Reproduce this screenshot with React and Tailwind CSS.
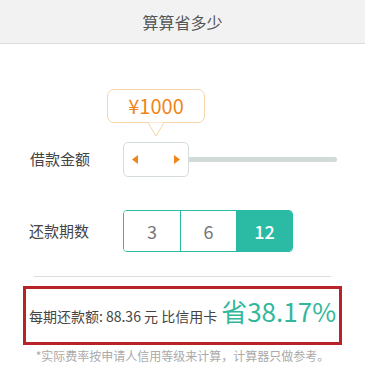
import React, { useState } from 'react';

const FONT = "font-['Noto_Sans_CJK_SC','Noto_Sans',sans-serif]";

const Tooltip = ({ value }) => (
  <div className="relative ml-[107px] w-[98px]">
    <div className="h-[34px] border border-[#f6d5aa] rounded-[7px] bg-white flex items-center justify-center text-[20px] leading-none text-[#f08519]">
      ¥{value}
    </div>
    {/* arrow */}
    <svg
      className="absolute left-[41px] top-[33px]"
      width="16"
      height="15"
      viewBox="0 0 16 15"
    >
      <path d="M0 0.5 L8 14 L16 0.5" fill="white" stroke="#f6d5aa" strokeWidth="1" />
    </svg>
  </div>
);

const Handle = () => (
  <div className="w-[66px] h-[35px] shrink-0 border border-[#d5dcdc] rounded-[5px] bg-white flex items-center justify-between px-[8px]">
    <svg width="6" height="9" viewBox="0 0 6 9">
      <path d="M6 0 L0 4.5 L6 9 Z" fill="#f08519" />
    </svg>
    <svg width="6" height="9" viewBox="0 0 6 9">
      <path d="M0 0 L6 4.5 L0 9 Z" fill="#f08519" />
    </svg>
  </div>
);

export default function App() {
  const [term, setTerm] = useState(12);
  const terms = [3, 6, 12];

  return (
    <div className={`w-[365px] h-[377px] bg-white ${FONT}`}>
      {/* Header */}
      <div className="h-[44px] bg-[#f2f2f2] border-b border-[#dcdcdc] flex items-center justify-center text-[16px] text-[#555]">
        算算省多少
      </div>

      {/* Amount slider */}
      <div className="mt-[45px]">
        <Tooltip value="1000" />
      </div>
      <div className="mt-[19px] flex items-center pl-[30px] pr-[28px]">
        <div className="w-[93px] text-[15px] text-[#444]">借款金额</div>
        <Handle />
        <div className="flex-1 h-[5px] bg-[#d3dada] rounded-r-full" />
      </div>

      {/* Terms */}
      <div className="mt-[33px] flex items-center pl-[29px]">
        <div className="w-[94px] text-[15px] text-[#444]">还款期数</div>
        <div className="flex h-[42px] border border-[#2bbba5] rounded-[4px] overflow-hidden">
          {terms.map((t, i) => (
            <button
              key={t}
              onClick={() => setTerm(t)}
              className={`h-full flex items-center justify-center text-[18px] ${
                i === 0 ? 'w-[56px]' : 'w-[56px] border-l border-[#2bbba5]'
              } ${term === t ? 'bg-[#2bbba5] text-white font-medium' : 'bg-white text-[#777]'}`}
            >
              {t}
            </button>
          ))}
        </div>
      </div>

      {/* Divider */}
      <div className="mx-[34px] mt-[24px] h-px bg-[#dddddd]" />

      {/* Result */}
      <div className="mx-[23px] mt-[9px] h-[59px] border-[3px] border-[#b8232a] flex items-baseline justify-center pt-[9px] gap-[4px] whitespace-nowrap">
        <span className="text-[14px] text-[#444]">每期还款额: 88.36 元 比信用卡</span>
        <span className="text-[26px] leading-none text-[#33b79b]">省38.17%</span>
      </div>

      <div className="mt-[2px] text-center text-[12px] text-[#aaa] whitespace-nowrap">
        *实际费率按申请人信用等级来计算，计算器只做参考。
      </div>
    </div>
  );
}
